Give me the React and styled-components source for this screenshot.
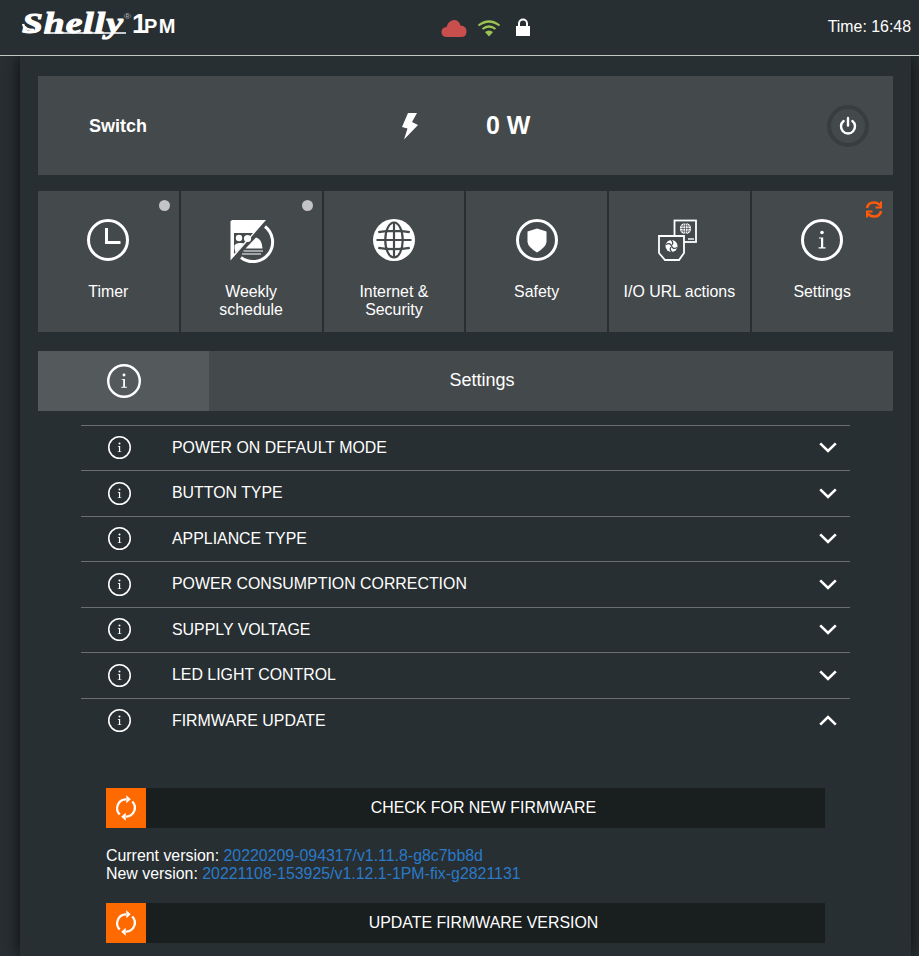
import React from 'react'
import styled, { createGlobalStyle } from 'styled-components'

const Global = createGlobalStyle`
  html, body {
    margin: 0;
    height: 100%;
    overflow: hidden;
    background: #282f32;
  }
  body {
    font-family: "Liberation Sans", Arial, sans-serif;
    font-size: 15.9px;
    color: #fff;
  }
  svg { display: block; }
`

const Page = styled.div`
  height: 956px;
  display: flex;
  flex-direction: column;
  overflow: hidden;
`
const Header = styled.header`
  height: 55px;
  flex: none;
  display: flex;
  align-items: center;
  background: #282f32;
  border-bottom: 1px solid #c3c7c3;
  position: relative;
  z-index: 2;
`
const Logo = styled.div`
  flex: 0 0 441px;
  padding-left: 22px;
  box-sizing: border-box;
  display: flex;
  align-items: flex-start;
  height: 55px;
`
const LogoMark = styled.div`
  position: relative;
  flex: 0 0 104px;
  height: 45px;
`
const Script = styled.span`
  display: block;
  margin-top: 3px;
  transform: scaleX(1.25);
  transform-origin: left center;
  white-space: nowrap;
  font-family: "Liberation Serif", "Times New Roman", serif;
  font-style: italic;
  font-weight: 700;
  font-size: 30px;
  line-height: 40px;
  letter-spacing: 0.8px;
  -webkit-text-stroke: 1px #fff;
`
const Swash = styled.svg`
  position: absolute;
  left: 0;
  top: 0;
`
const Reg = styled.span`
  font-family: "Liberation Sans", sans-serif;
  font-style: normal;
  font-weight: 400;
  font-size: 8px;
  line-height: 0;
  letter-spacing: 0;
  vertical-align: 14px;
  color: #b5b8b8;
  -webkit-text-stroke: 0;
`
const Model = styled.span`
  margin: 9px 0 0 6px;
  font-weight: 700;
  font-size: 20px;
  line-height: 30px;
  letter-spacing: 1.5px;
  display: flex;
  align-items: baseline;
  b { font-size: 27px; letter-spacing: -3px; }
`
const Status = styled.div`
  display: flex;
  align-items: center;
  gap: 10px;
`
const Time = styled.div`
  margin-left: auto;
  padding: 0 8px 2px 0;
`
const Main = styled.main`
  flex: 1;
  margin: 0 8px 0 20px;
  padding: 20px 18px 0;
  background: #282f32;
  box-shadow: 0 0 16px rgba(0, 0, 0, 0.75);
`
const SwitchBar = styled.section`
  height: 99px;
  background: #44494c;
  display: flex;
  align-items: center;
  padding: 0 24px 0 51px;
`
const SwitchName = styled.div`
  width: 312px;
  padding-top: 2px;
  font-weight: 700;
  font-size: 18px;
`
const Watts = styled.div`
  margin-left: 67px;
  font-weight: 700;
  font-size: 25px;
`
const PowerButton = styled.button`
  margin-left: auto;
  width: 42px;
  height: 42px;
  padding: 0;
  box-sizing: border-box;
  border-radius: 50%;
  border: 4px solid #383d40;
  background: #44494c;
  display: flex;
  align-items: center;
  justify-content: center;
  color: #fff;
`
const Tiles = styled.nav`
  margin: 16px 0.5px 0 0;
  display: grid;
  grid-template-columns: repeat(6, 1fr);
  gap: 2px;
`
const Tile = styled.div`
  position: relative;
  height: 141px;
  background: #44494c;
  display: flex;
  flex-direction: column;
  align-items: center;
  padding-top: 22px;
  box-sizing: border-box;
`
const TileLabel = styled.div`
  margin-top: 16px;
  line-height: 18px;
  text-align: center;
`
const Dot = styled.span`
  position: absolute;
  top: 9px;
  right: 9px;
  width: 11px;
  height: 11px;
  border-radius: 50%;
  background: #c4c4c6;
`
const Corner = styled.span`
  position: absolute;
  top: 9px;
  right: 10px;
`
const TabBar = styled.div`
  margin-top: 19px;
  height: 60px;
  display: flex;
  background: #44494c;
`
const ActiveTab = styled.div`
  flex: 0 0 171px;
  background: #54595c;
  display: flex;
  align-items: center;
  justify-content: center;
`
const TabTitle = styled.div`
  flex: 1;
  padding: 0 138px 2px 0;
  display: flex;
  align-items: center;
  justify-content: center;
  font-size: 18px;
`
const List = styled.div`
  margin: 13.9px 43px 0;
`
const Row = styled.div`
  height: 45.5px;
  box-sizing: border-box;
  border-top: 1px solid #6b6f71;
  padding-bottom: 0.4px;
  display: flex;
  align-items: center;
`
const RowIcon = styled.span`
  flex: 0 0 91px;
  padding-left: 27px;
  box-sizing: border-box;
`
const RowChevron = styled.span`
  margin-left: auto;
  margin-right: 13px;
`
const Action = styled.div`
  margin: 0 25px;
  height: 40px;
  display: flex;
  background: #191e1f;
`
const ActionIcon = styled.span`
  flex: 0 0 40px;
  background: #ff6a00;
  display: flex;
  align-items: center;
  justify-content: center;
`
const ActionLabel = styled.span`
  flex: 1;
  display: flex;
  align-items: center;
  justify-content: center;
  padding-right: 4px;
`
const Firmware = styled.div`
  margin-top: 44.6px;
`
const Versions = styled.div`
  margin: 19px 25px 20px;
  line-height: 18px;
  a { color: #2a7ac9; text-decoration: none; }
`

const InfoGlyph = ({ size, stroke }) => (
  <svg width={size} height={size} viewBox="0 0 42 42">
    <circle cx="21" cy="21" r={21 - stroke / 2} fill="none" stroke="#fff" strokeWidth={stroke} />
    <circle cx="21" cy="13.5" r="1.8" fill="#fff" />
    <path d="M18 18.4h4.2v9.8h2.4v1.2h-7v-1.2h2.4v-8.6h-2z" fill="#fff" />
  </svg>
)

const ClockIcon = () => (
  <svg width="54" height="54" viewBox="0 0 54 54" fill="none" stroke="#fff">
    <circle cx="27" cy="27" r="19.5" strokeWidth="3" />
    <path d="M25.5 15V29.5H39.5" strokeWidth="3" />
  </svg>
)

const ScheduleIcon = () => (
  <svg width="54" height="54" viewBox="0 0 54 54">
    <path d="M8 7H42L6.5 47.5V8.5Z" fill="#fff" />
    <path d="M10 20H29L10 41Z" fill="#44494c" />
    <circle cx="15" cy="25" r="3.2" fill="#fff" />
    <circle cx="23.5" cy="25.5" r="3.6" fill="#fff" />
    <path d="M10.5 36V32.5Q12 29.5 17 30L20 30.5L11.5 39.5Z" fill="#fff" />
    <path d="M41 13.5A18.5 18.5 0 1 1 17 44.5" fill="none" stroke="#fff" strokeWidth="3" />
    <path d="M32 24.5Q38 26 38.5 35.5H21.5Z" fill="#fff" />
    <path d="M19.5 38H39M18 41H37" stroke="#fff" strokeWidth="1.2" />
  </svg>
)

const GlobeLines = ({ cx, cy, r, w, color }) => (
  <g fill="none" stroke={color} strokeWidth={w}>
    <ellipse cx={cx} cy={cy} rx={r * 0.5} ry={r} />
    <path d={`M${cx} ${cy - r}V${cy + r}M${cx - r} ${cy}H${cx + r}M${cx - r * 0.9} ${cy - r * 0.45}Q${cx} ${cy - r * 0.6} ${cx + r * 0.9} ${cy - r * 0.45}M${cx - r * 0.9} ${cy + r * 0.45}Q${cx} ${cy + r * 0.6} ${cx + r * 0.9} ${cy + r * 0.45}`} />
  </g>
)

const GlobeIcon = () => (
  <svg width="54" height="54" viewBox="0 0 54 54">
    <circle cx="27" cy="27" r="21" fill="#fff" />
    <GlobeLines cx={27} cy={27} r={17.5} w={2.2} color="#44494c" />
  </svg>
)

const ShieldIcon = () => (
  <svg width="54" height="54" viewBox="0 0 54 54">
    <circle cx="27" cy="27" r="19.5" fill="none" stroke="#fff" strokeWidth="3" />
    <path d="M27 15.5L36.5 18.5V29Q36 34 27 39.5Q18 34 17.5 29V18.5Z" fill="#fff" />
  </svg>
)

const ActionsIcon = () => (
  <svg width="54" height="54" viewBox="0 0 54 54">
    <rect x="22.5" y="7.5" width="21.5" height="21.5" fill="none" stroke="#fff" strokeWidth="1.8" />
    <circle cx="33.5" cy="15.5" r="5.6" fill="#fff" />
    <GlobeLines cx={33.5} cy={15.5} r={5.2} w={0.7} color="#44494c" />
    <path d="M36 26H42" stroke="#fff" strokeWidth="1.4" />
    <path d="M7 23H32V40L27 47H13L7 40Z" fill="#44494c" stroke="#fff" strokeWidth="1.8" />
    <circle cx="19.5" cy="33" r="6" fill="#fff" />
    <path d="M14 31.5Q18 29 19.5 33T25 34.5M19 27Q22 29 20 32M20 39Q17 37 19 34" fill="none" stroke="#44494c" strokeWidth="1.2" />
  </svg>
)

const SyncIcon = () => (
  <svg width="26" height="28" viewBox="0 0 24 26" fill="none">
    <path d="M12 5A8.2 8.2 0 0 0 6.2 19" stroke="#fff" strokeWidth="2.1" />
    <path d="M17.8 7A8.2 8.2 0 0 1 12 21" stroke="#fff" strokeWidth="2.1" />
    <path d="M12.3 1.2V8.6L16.4 4.9Z" fill="#fff" />
    <path d="M11.7 17.4V24.8L7.6 21.1Z" fill="#fff" />
  </svg>
)

const PendingIcon = () => (
  <svg width="18" height="19" viewBox="0 0 18 19" fill="none" stroke="#ff5a0a" strokeWidth="2.6">
    <path d="M2 8Q3 2.5 9 2.5Q13 2.5 15 5.5" />
    <path d="M16 11Q15 16.5 9 16.5Q5 16.5 3 13.5" />
    <path d="M16 1.5V7.5H10.5" strokeWidth="2" />
    <path d="M2 17.5V11.5H7.5" strokeWidth="2" />
  </svg>
)

const Chevron = ({ up }) => (
  <svg width="18" height="11" viewBox="0 0 18 11" fill="none" stroke="#fff" strokeWidth="2.6">
    <path d={up ? 'M1.2 9.6L9 2L16.8 9.6' : 'M1.2 1.4L9 9L16.8 1.4'} />
  </svg>
)

const tiles = [
  { label: ['Timer'], icon: <ClockIcon />, badge: <Dot /> },
  { label: ['Weekly', 'schedule'], icon: <ScheduleIcon />, badge: <Dot /> },
  { label: ['Internet &', 'Security'], icon: <GlobeIcon /> },
  { label: ['Safety'], icon: <ShieldIcon /> },
  { label: ['I/O URL actions'], icon: <ActionsIcon /> },
  {
    label: ['Settings'],
    icon: (
      <svg width="54" height="54" viewBox="0 0 54 54">
        <g transform="translate(6 6)">
          <circle cx="21" cy="21" r="19.5" fill="none" stroke="#fff" strokeWidth="3" />
          <circle cx="21" cy="13.5" r="1.8" fill="#fff" />
          <path d="M18 18.4h4.2v9.8h2.4v1.2h-7v-1.2h2.4v-8.6h-2z" fill="#fff" />
        </g>
      </svg>
    ),
    badge: <Corner><PendingIcon /></Corner>,
  },
]

const rows = [
  'POWER ON DEFAULT MODE',
  'BUTTON TYPE',
  'APPLIANCE TYPE',
  'POWER CONSUMPTION CORRECTION',
  'SUPPLY VOLTAGE',
  'LED LIGHT CONTROL',
  'FIRMWARE UPDATE',
]

export default function App() {
  return (
    <Page>
      <Global />
      <Header>
        <Logo>
          <LogoMark>
            <Script>Shelly<Reg>®</Reg></Script>
            <Swash width="106" height="40" viewBox="0 0 106 40" fill="none" stroke="#fff" strokeWidth="1.6">
              <path d="M22 33H104" />
              <path d="M1 24Q2 30 12 30" strokeWidth="2.4" />
            </Swash>
          </LogoMark>
          <Model><b>1</b>PM</Model>
        </Logo>
        <Status>
          <svg width="26" height="18" viewBox="0 0 26 18">
            <path d="M6 18Q0.5 18 0.5 13Q0.5 8.5 5.5 8Q7 2 13 1Q18 1 19.5 6.5Q25.5 7 25.5 12.5Q25.5 18 20 18Z" fill="#c94f4f" />
          </svg>
          <svg width="24" height="18" viewBox="0 0 24 18" fill="none" stroke="#9bc450" strokeWidth="2.2">
            <path d="M1.5 6.5Q12 -1.5 22.5 6.5" />
            <path d="M5.5 10Q12 5 18.5 10" />
            <path d="M12 17.5L8 13Q12 10 16 13Z" fill="#9bc450" stroke="none" />
          </svg>
          <svg width="16" height="19" viewBox="0 0 16 19" style={{ marginLeft: 4 }}>
            <path d="M4 8V5.5A4 4 0 0 1 12 5.5V8" fill="none" stroke="#fff" strokeWidth="2" />
            <rect x="1" y="8" width="14" height="10" fill="#fff" />
          </svg>
        </Status>
        <Time>Time: 16:48</Time>
      </Header>
      <Main>
        <SwitchBar>
          <SwitchName>Switch</SwitchName>
          <svg width="18" height="28" viewBox="0 0 18 28">
            <path d="M7 1H16L11 10L17 13L3 27.5L6.5 16.5L1 15Z" fill="#fff" />
          </svg>
          <Watts>0 W</Watts>
          <PowerButton aria-label="Power">
            <svg width="20" height="20" viewBox="0 0 20 20" fill="none" stroke="#fff" strokeWidth="2.4" strokeLinecap="round">
              <path d="M10 2V9.5" />
              <path d="M5.6 5A7 7 0 1 0 14.4 5" />
            </svg>
          </PowerButton>
        </SwitchBar>
        <Tiles>
          {tiles.map((t) => (
            <Tile key={t.label[0]}>
              {t.badge}
              {t.icon}
              <TileLabel>
                {t.label.map((line) => <div key={line}>{line}</div>)}
              </TileLabel>
            </Tile>
          ))}
        </Tiles>
        <TabBar>
          <ActiveTab><InfoGlyph size={34} stroke={3} /></ActiveTab>
          <TabTitle>Settings</TabTitle>
        </TabBar>
        <List>
          {rows.map((name, i) => (
            <Row key={name}>
              <RowIcon><InfoGlyph size={23} stroke={2.8} /></RowIcon>
              {name}
              <RowChevron><Chevron up={i === rows.length - 1} /></RowChevron>
            </Row>
          ))}
          <Firmware>
            <Action>
              <ActionIcon><SyncIcon /></ActionIcon>
              <ActionLabel>CHECK FOR NEW FIRMWARE</ActionLabel>
            </Action>
            <Versions>
              <div>Current version: <a href="#current">20220209-094317/v1.11.8-g8c7bb8d</a></div>
              <div>New version: <a href="#new">20221108-153925/v1.12.1-1PM-fix-g2821131</a></div>
            </Versions>
            <Action>
              <ActionIcon><SyncIcon /></ActionIcon>
              <ActionLabel>UPDATE FIRMWARE VERSION</ActionLabel>
            </Action>
          </Firmware>
        </List>
      </Main>
    </Page>
  )
}
